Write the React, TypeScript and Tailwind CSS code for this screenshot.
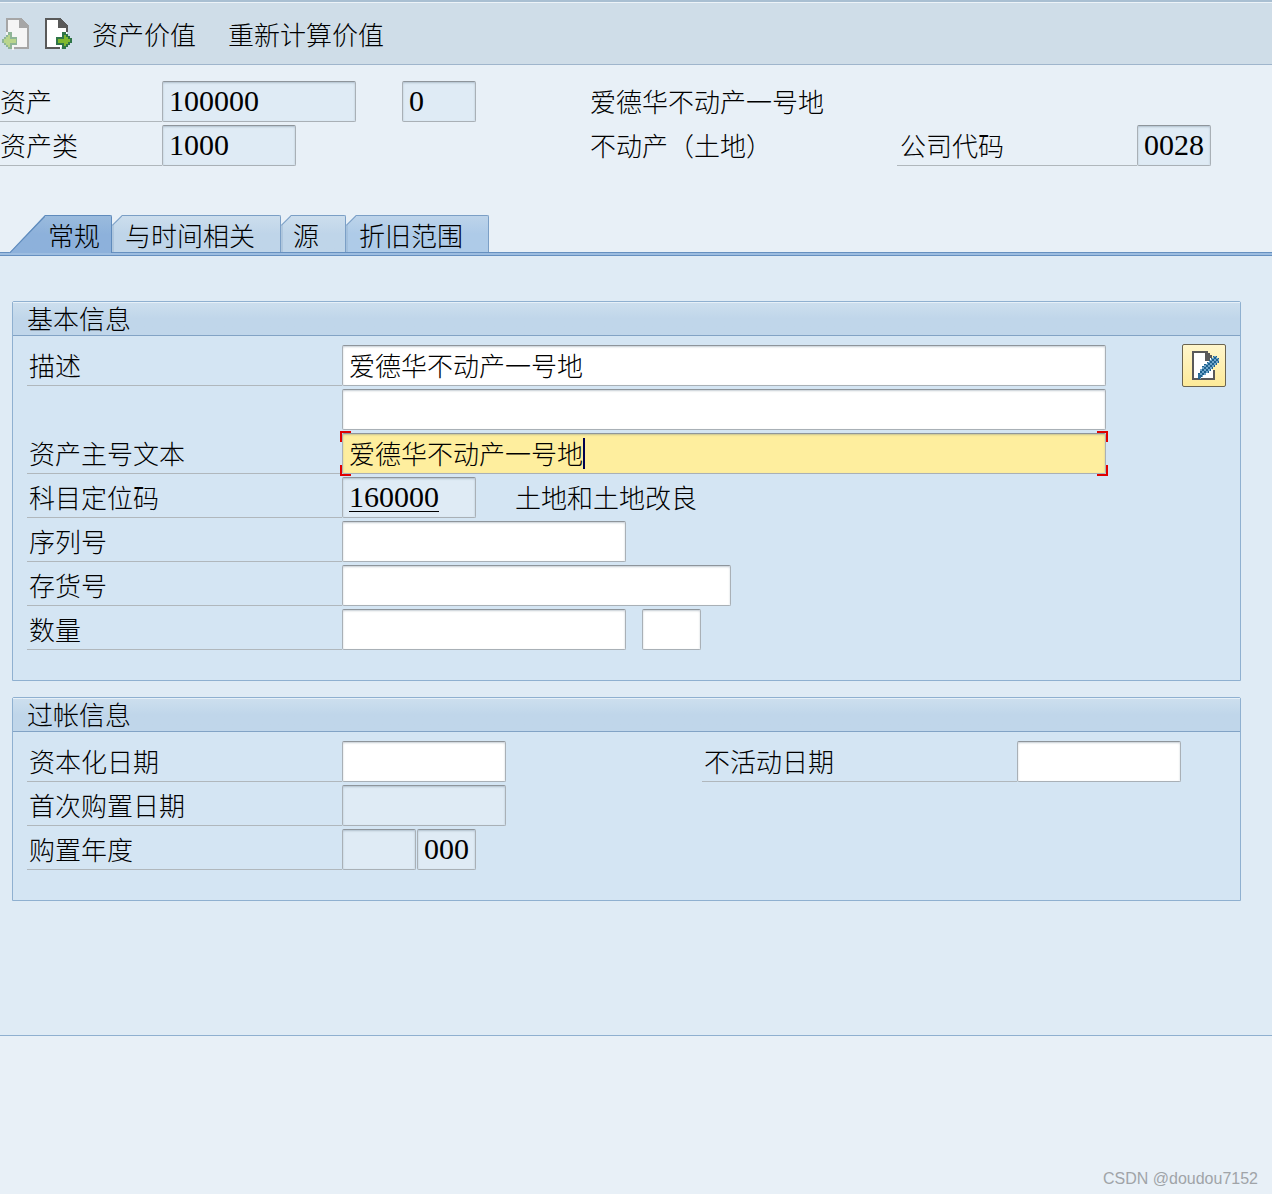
import React, { useState } from "react";

type FieldProps = {
  id: string;
  label?: string;
  value?: string;
  width: string;
  bg?: string;
  readOnly?: boolean;
  className?: string;
};

const Field: React.FC<FieldProps> = ({
  id,
  label,
  value = "",
  width,
  readOnly,
  bg = readOnly ? "bg-[#dfebf5]" : "bg-white",
  className = "",
}) => {
  const [text, setText] = useState(value);

  return (
    <input
      id={id}
      type="text"
      aria-label={label}
      value={text}
      readOnly={readOnly}
      onChange={(e) => setText(e.target.value)}
      className={`block h-[41px] min-w-0 rounded-xs border border-[#a9b0b6] border-t-[#8e959b] px-1.5 pb-0.5 font-['Liberation_Serif','Noto_Sans_CJK_SC',serif] outline-none inset-shadow-[0_1px_2px_rgba(90,110,130,0.35)] ${bg} ${width} ${className}`}
    />
  );
};

type LabelProps = {
  htmlFor: string;
  width: string;
  children: React.ReactNode;
};

const Label: React.FC<LabelProps> = ({ htmlFor, width, children }) => (
  <label
    htmlFor={htmlFor}
    className={`h-[41px] shrink-0 border-b border-[#b0b7bc] text-[26px] leading-10 whitespace-nowrap ${width}`}
  >
    {children}
  </label>
);

type GroupProps = {
  title: string;
  children: React.ReactNode;
};

const Group: React.FC<GroupProps> = ({ title, children }) => (
  <section className="rounded-t-xs border border-[#8fb0d0] bg-[#d4e5f3]">
    <h2 className="h-[34px] border-b border-[#82a3c5] bg-linear-to-b from-[#cddfee] to-[#c0d6ea] to-50% pl-[14px] text-[26px] leading-[31px] inset-shadow-[0_1px_0_#e6f0f8]">
      {title}
    </h2>
    {children}
  </section>
);

const PreviousIcon = () => (
  <svg width="28" height="32" viewBox="0 0 28 32" shapeRendering="crispEdges">
    <path d="M5 1h14l7 7v22H5z" fill="#f5f5f5" stroke="#a6a6a6" strokeWidth="2" />
    <path d="M17 0h3v2h2v2h2v2h2v2h1v2H17z" fill="#a6a6a6" />
    <path d="M4 14h6v4h6v11h-4v3H3z" fill="#f5f5f5" />
    <path d="M0 14h4v18H0zM4 29h6v3H4z" fill="#cfdde8" />
    <path
      d="M6 14h4v5h5v8h-5v4H6v-2H4v-2H2v-2H0v-4h2v-2h2v-2h2z"
      fill="#8fb597"
    />
    <path d="M8 17v4h6v4H8v4H6v-2H4v-2H2v-4h2v-2h2v-2z" fill="#b9d58c" />
  </svg>
);

const NextIcon = () => (
  <svg width="28" height="32" viewBox="0 0 28 32" shapeRendering="crispEdges">
    <path d="M1 1h14l7 7v22H1z" fill="#fff" stroke="#595959" strokeWidth="2" />
    <path d="M13 0h3v2h2v2h2v2h2v2h1v2H13z" fill="#595959" />
    <path d="M10 17h6v-3h7v17h-8v-4h-5z" fill="#fff" />
    <path d="M22 14h6v18h-6zM16 29h6v3h-6z" fill="#cfdde8" />
    <path
      d="M17 14h4v2h2v2h2v2h2v5h-2v2h-2v2h-2v2h-4v-4h-6v-8h6z"
      fill="#2f7548"
    />
    <path d="M19 17h2v2h2v2h2v3h-2v2h-2v2h-2v-3h-6v-4h6z" fill="#7fb82e" />
  </svg>
);

const EditIcon = () => (
  <svg width="28" height="30" viewBox="0 0 28 30" shapeRendering="crispEdges">
    <defs>
      <pattern id="pen" width="4" height="4" patternUnits="userSpaceOnUse">
        <path d="M0 0h4v4H0z" fill="#6fa5cb" />
        <path d="M0 0h2v2H0zM2 2h2v2H2z" fill="#1e618e" />
      </pattern>
    </defs>
    <path d="M1 1h13l8 8v19H1z" fill="#fff" stroke="#595959" strokeWidth="2" />
    <path d="M13 0h3v2h2v2h2v3h-2v3h-5z" fill="#595959" />
    <path d="M20 6h4v13h-4z" fill="#feefa9" />
    <path
      d="M21 5h4v2h2v5h-2v2h-2v2h-2v2h-2v2h-2v2h-3v2h-3v2H9v2H6v-6h2v-4h2v-3h2v-2h3v-2h2V9h2V7h2z"
      fill="url(#pen)"
    />
    <path d="M6 23h2v2h1v2H6z" fill="#2c6d99" />
  </svg>
);

const tabs = [
  { name: "常规", body: "w-[67px] pl-[3px]", fill: "border-[#5f8bbc] from-[#9abbdd] to-[#8db1db]" },
  { name: "与时间相关", body: "w-[159px] pl-[3px]", fill: "border-[#7b9fc6] from-[#ccdeed] to-[#bfd5e9]" },
  { name: "源", body: "w-[55px] pl-[2px]", fill: "border-[#7b9fc6] from-[#ccdeed] to-[#bfd5e9]" },
  { name: "折旧范围", body: "w-[133px] pl-[3px]", fill: "border-[#7b9fc6] from-[#bdd4ea] to-[#aecbe8]" },
];

const Tabs: React.FC = () => {
  const [active, setActive] = useState(0);

  return (
    <div>
      <div role="tablist" className="flex h-[37px] pl-[9px]">
        {tabs.map((tab, i) => (
          <button
            key={tab.name}
            type="button"
            role="tab"
            aria-selected={active === i}
            onClick={() => setActive(i)}
            className={`flex ${active === i ? "relative z-10 h-[38px]" : "h-[37px]"}`}
          >
            {i === 0 ? (
              <span
                className={`h-full w-9 bg-linear-to-b to-50% [clip-path:polygon(100%_0,100%_100%,0_100%)] ${tab.fill}`}
              >
                <svg width="36" height="38" viewBox="0 0 36 38">
                  <path d="M0 38L36 .5" fill="none" stroke="#5f8bbc" strokeWidth="2" />
                </svg>
              </span>
            ) : (
              <span
                className={`h-full w-2.5 bg-linear-to-b to-50% [clip-path:polygon(100%_0,100%_100%,0_100%,0_10px)] ${tab.fill}`}
              >
                <svg width="10" height="37" viewBox="0 0 10 37">
                  <path d="M0 10L10 0" fill="none" stroke="#7b9fc6" strokeWidth="2" />
                  <path d="M0 10h2v27H0z" fill="#8fabc8" opacity=".35" />
                </svg>
              </span>
            )}
            <span
              className={`h-full rounded-tr-xs border-t border-r bg-linear-to-b to-50% text-left text-[26px] leading-[38px] whitespace-nowrap ${tab.fill} ${tab.body}`}
            >
              {tab.name}
            </span>
          </button>
        ))}
      </div>
      <div className="h-1 border-y border-[#6690c0] bg-[#9dbde0]" />
    </div>
  );
};

const corners = [
  "-top-0.5 -left-0.5 border-t-2 border-l-2",
  "-top-0.5 -right-0.5 border-t-2 border-r-2",
  "-bottom-0.5 -left-0.5 border-b-2 border-l-2",
  "-right-0.5 -bottom-0.5 border-r-2 border-b-2",
];

const App: React.FC = () => {
  return (
    <div className="flex min-h-screen flex-col bg-[#e8f0f7] font-['Noto_Sans_CJK_SC',sans-serif] text-[30px] font-light text-black">
      <header className="flex h-[65px] items-center border-t-2 border-b border-t-[#a9bfd2] border-b-[#9fb5cc] bg-[#cfdde8] pt-0.5 pl-[2px] text-[26px] inset-shadow-[0_1px_0_#edf3f8]">
        <button type="button" aria-label="上一个资产">
          <PreviousIcon />
        </button>
        <button type="button" aria-label="下一个资产" className="ml-[15px]">
          <NextIcon />
        </button>
        <button type="button" className="ml-[19px] leading-8">
          资产价值
        </button>
        <button type="button" className="ml-8 leading-8">
          重新计算价值
        </button>
      </header>

      <div className="flex flex-col gap-[3px] pt-4">
        <div className="flex">
          <Label htmlFor="asset" width="w-[162px]">
            资产
          </Label>
          <Field id="asset" value="100000" width="w-[194px]" readOnly />
          <Field id="subnumber" label="次级编号" value="0" width="w-[74px]" readOnly className="ml-[46px]" />
          <span className="ml-[114px] text-[26px] leading-10">爱德华不动产一号地</span>
        </div>
        <div className="flex">
          <Label htmlFor="class" width="w-[162px]">
            资产类
          </Label>
          <Field id="class" value="1000" width="w-[134px]" readOnly />
          <span className="ml-[294px] w-[307px] text-[26px] leading-10">不动产（土地）</span>
          <Label htmlFor="company" width="w-[240px] pl-[3px]">
            公司代码
          </Label>
          <Field id="company" value="0028" width="w-[74px]" readOnly />
        </div>
      </div>

      <div className="mt-[49px]">
        <Tabs />
      </div>

      <main className="flex flex-1 flex-col gap-4 border-b border-[#8fb0d0] bg-[#dfebf5] pt-[45px] pr-[31px] pl-3">
        <Group title="基本信息">
          <div className="flex justify-between pt-[9px] pr-[14px] pb-[30px] pl-[14px]">
            <div className="flex flex-1 flex-col gap-[3px]">
              <div className="flex">
                <Label htmlFor="description" width="w-[315px] pl-[2px]">
                  描述
                </Label>
                <Field id="description" value="爱德华不动产一号地" width="w-[764px]" className="text-[26px]" />
              </div>
              <div className="flex pl-[315px]">
                <Field id="description2" label="描述 2" width="w-[764px]" />
              </div>
              <div className="flex">
                <Label htmlFor="mainText" width="w-[315px] pl-[2px]">
                  资产主号文本
                </Label>
                <div className="relative w-[764px] min-w-0">
                  <Field
                    id="mainText"
                    value="爱德华不动产一号地"
                    width="w-full"
                    bg="bg-[#feee9e]"
                    className="text-[26px]"
                  />
                  {corners.map((c) => (
                    <span key={c} className={`absolute size-[11px] border-[#e00000] ${c}`} />
                  ))}
                  <span className="absolute top-[5px] left-[241px] h-[31px] w-0.5 bg-[#000050]" />
                </div>
              </div>
              <div className="flex">
                <Label htmlFor="account" width="w-[315px] pl-[2px]">
                  科目定位码
                </Label>
                <Field
                  id="account"
                  value="160000"
                  width="w-[134px]"
                  readOnly
                  className="underline decoration-1 underline-offset-4"
                />
                <span className="ml-[39px] text-[26px] leading-10">土地和土地改良</span>
              </div>
              <div className="flex">
                <Label htmlFor="serial" width="w-[315px] pl-[2px]">
                  序列号
                </Label>
                <Field id="serial" width="w-[284px]" />
              </div>
              <div className="flex">
                <Label htmlFor="inventory" width="w-[315px] pl-[2px]">
                  存货号
                </Label>
                <Field id="inventory" width="w-[389px]" />
              </div>
              <div className="flex">
                <Label htmlFor="quantity" width="w-[315px] pl-[2px]">
                  数量
                </Label>
                <Field id="quantity" width="w-[284px]" />
                <Field id="unit" label="单位" width="w-[59px]" className="ml-4" />
              </div>
            </div>
            <button
              type="button"
              aria-label="编辑长文本"
              className="-mt-px flex h-[43px] w-11 shrink-0 items-center justify-center rounded-xs border border-[#6b6450] bg-linear-to-b from-[#fff6cc] to-[#fdea98] pl-[3px]"
            >
              <EditIcon />
            </button>
          </div>
        </Group>

        <Group title="过帐信息">
          <div className="flex flex-col gap-[3px] px-[14px] pt-[9px] pb-[30px]">
            <div className="flex">
              <Label htmlFor="capitalized" width="w-[315px] pl-[2px]">
                资本化日期
              </Label>
              <Field id="capitalized" width="w-[164px]" />
              <div className="ml-[196px] flex">
                <Label htmlFor="deactivated" width="w-[315px] pl-[2px]">
                  不活动日期
                </Label>
                <Field id="deactivated" width="w-[164px]" />
              </div>
            </div>
            <div className="flex">
              <Label htmlFor="firstAcquired" width="w-[315px] pl-[2px]">
                首次购置日期
              </Label>
              <Field id="firstAcquired" width="w-[164px]" readOnly />
            </div>
            <div className="flex gap-px">
              <div className="flex">
                <Label htmlFor="year" width="w-[315px] pl-[2px]">
                  购置年度
                </Label>
                <Field id="year" width="w-[74px]" readOnly />
              </div>
              <Field id="period" label="期间" value="000" width="w-[59px]" readOnly />
            </div>
          </div>
        </Group>
      </main>

      <footer className="flex h-[158px] items-end justify-end pr-[14px] pb-[3px] font-['Liberation_Sans',sans-serif] text-base font-normal text-[#a0a4a8]">
        CSDN @doudou7152
      </footer>
    </div>
  );
};

export default App;
